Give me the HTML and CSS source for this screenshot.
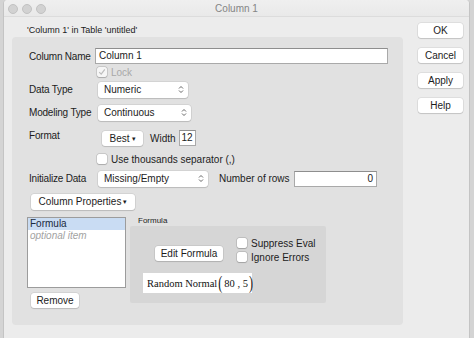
FILE: index.html
```html
<!DOCTYPE html>
<html lang="en">
<head>
    <meta charset="UTF-8">
    <title>Column 1</title>
    <link rel="stylesheet" href="styles.css">
</head>
<body>
    <div class="window">
        <div class="titlebar">
            <div class="lights"><span></span><span></span><span></span></div>
            <div class="title">Column 1</div>
        </div>
        <div class="content">
            <div class="main">
                <div class="caption">'Column 1' in Table 'untitled'</div>
                <div class="panel">
                    <div class="row">
                        <span class="lbl">Column Name</span>
                        <div class="field name-field">Column 1</div>
                    </div>
                    <div class="row check-row lock-row">
                        <span class="box checked"><svg width="8" height="8" viewBox="0 0 8 8"><path d="M1.2 4.2 L3.2 6.2 L6.8 1.4" fill="none" stroke="#bdbdbd" stroke-width="1.2"/></svg></span>
                        <span class="muted">Lock</span>
                    </div>
                    <div class="row type-row">
                        <span class="lbl lbl-sel">Data Type</span>
                        <div class="select sel-numeric">Numeric<svg class="chev" width="6" height="9" viewBox="0 0 6 9"><path d="M1 3.5 L3 1.5 L5 3.5 M1 5.5 L3 7.5 L5 5.5" fill="none" stroke="#555" stroke-width="0.9"/></svg></div>
                    </div>
                    <div class="row model-row">
                        <span class="lbl lbl-sel">Modeling Type</span>
                        <div class="select sel-cont">Continuous<svg class="chev" width="6" height="9" viewBox="0 0 6 9"><path d="M1 3.5 L3 1.5 L5 3.5 M1 5.5 L3 7.5 L5 5.5" fill="none" stroke="#555" stroke-width="0.9"/></svg></div>
                    </div>
                    <div class="row format-row">
                        <span class="lbl lbl-top">Format</span>
                        <div class="btn best-btn">Best<span class="caret">&#9662;</span></div>
                        <span class="width-lbl">Width</span>
                        <div class="field width-field">12</div>
                    </div>
                    <div class="row check-row sep-row">
                        <span class="box"></span>
                        <span>Use thousands separator (,)</span>
                    </div>
                    <div class="row init-row">
                        <span class="lbl lbl-sel">Initialize Data</span>
                        <div class="select sel-missing">Missing/Empty<svg class="chev" width="6" height="9" viewBox="0 0 6 9"><path d="M1 3.5 L3 1.5 L5 3.5 M1 5.5 L3 7.5 L5 5.5" fill="none" stroke="#555" stroke-width="0.9"/></svg></div>
                        <span class="rows-lbl">Number of rows</span>
                        <div class="field rows-field">0</div>
                    </div>
                    <div class="row props-row">
                        <div class="btn props-btn">Column Properties<span class="caret">&#9662;</span></div>
                    </div>
                    <div class="lower">
                        <div class="list-col">
                            <div class="list">
                                <div class="item selected">Formula</div>
                                <div class="item optional">optional item</div>
                            </div>
                            <div class="btn remove-btn">Remove</div>
                        </div>
                        <div class="formula-col">
                            <div class="group-lbl">Formula</div>
                            <div class="group">
                                <div class="group-top">
                                    <div class="btn edit-btn">Edit Formula</div>
                                    <div class="opts">
                                        <div class="check-row"><span class="box"></span><span>Suppress Eval</span></div>
                                        <div class="check-row"><span class="box"></span><span>Ignore Errors</span></div>
                                    </div>
                                </div>
                                <div class="formula">Random Normal<span class="paren">(</span>80 , 5<span class="paren">)</span></div>
                            </div>
                        </div>
                    </div>
                </div>
            </div>
            <div class="side">
                <div class="btn side-btn">OK</div>
                <div class="btn side-btn">Cancel</div>
                <div class="btn side-btn">Apply</div>
                <div class="btn side-btn">Help</div>
            </div>
        </div>
    </div>
</body>
</html>
```

FILE: styles.css
```css
body {
    margin: 0;
    width: 474px;
    height: 338px;
    overflow: hidden;
    background-color: #d4d4d4;
    font-family: 'Liberation Sans', Arial, sans-serif;
    font-size: 10px;
    color: #1c1c1c;
}

.window {
    margin-left: 3px;
    width: 465px;
    height: 338px;
    background-color: #ececec;
    border-left: 1px solid #c4c4c4;
    border-right: 1px solid #c4c4c4;
    border-radius: 4px 4px 0 0;
}

.titlebar {
    position: relative;
    height: 16px;
    border-bottom: 1px solid #dcdcdc;
    background: linear-gradient(#efefef, #e9e9e9);
    border-radius: 4px 4px 0 0;
}

.lights {
    display: flex;
    gap: 4px;
    padding: 4px 0 0 4px;
}

.lights span {
    width: 8px;
    height: 8px;
    border-radius: 50%;
    background-color: #d2d2d2;
    border: 0.5px solid #c2c2c2;
}

.title {
    position: absolute;
    top: 0;
    left: 0;
    right: 0;
    text-align: center;
    line-height: 17px;
    font-size: 10px;
    color: #858585;
}

.content {
    display: flex;
}

.main {
    margin-left: 8px;
    width: 391px;
}

.caption {
    height: 14px;
    padding: 6px 0 0 15px;
    line-height: 14px;
    font-size: 9px;
    color: #222;
}

.panel {
    height: 277px;
    padding: 11px 0 0 15px;
    background-color: #e1e1e1;
    border-radius: 4px;
}

.row {
    display: flex;
    align-items: center;
    padding-left: 2px;
    white-space: nowrap;
}

.lbl {
    width: 66px;
    flex-shrink: 0;
    letter-spacing: -0.2px;
}

.lbl-sel {
    width: 69px;
    margin-top: -2px;
}

.lbl-top {
    align-self: flex-start;
    width: 73px;
}

.field {
    height: 16px;
    box-sizing: border-box;
    background-color: #fff;
    border: 1px solid #a9a9a9;
    border-top-color: #8e8e8e;
    padding: 0 3px;
    line-height: 14px;
    font-size: 10px;
}

.name-field {
    width: 293px;
}

.select {
    position: relative;
    height: 16px;
    box-sizing: border-box;
    padding-left: 6px;
    line-height: 16px;
    background-color: #fff;
    border-radius: 3px;
    box-shadow: 0 0 0 0.5px rgba(0, 0, 0, 0.12), 0 1px 1px rgba(0, 0, 0, 0.12);
    font-size: 10px;
}

.chev {
    position: absolute;
    right: 4px;
    top: 3px;
}

.sel-numeric {
    width: 90px;
}

.sel-cont {
    width: 93px;
}

.sel-missing {
    width: 110px;
}

.btn {
    height: 15px;
    box-sizing: border-box;
    line-height: 15px;
    text-align: center;
    white-space: nowrap;
    background-color: #fff;
    border-radius: 3px;
    box-shadow: 0 0 0 0.5px rgba(0, 0, 0, 0.12), 0 1px 1px rgba(0, 0, 0, 0.12);
    font-size: 10px;
}

.caret {
    margin-left: 2px;
    font-size: 7px;
    vertical-align: 1px;
}

.check-row {
    display: flex;
    align-items: center;
    height: 10px;
    white-space: nowrap;
}

.box {
    width: 10px;
    height: 10px;
    box-sizing: border-box;
    margin-right: 4px;
    background-color: #fff;
    border-radius: 2px;
    box-shadow: 0 0 0 0.5px rgba(0, 0, 0, 0.2), 0 0.5px 1px rgba(0, 0, 0, 0.15);
    display: flex;
    align-items: center;
    justify-content: center;
}

.box.checked {
    background-color: #f6f6f6;
}

.muted {
    color: #a8a8a8;
}

.lock-row {
    margin-top: 3px;
    padding-left: 70px;
}

.type-row {
    margin-top: 5px;
}

.model-row {
    margin-top: 7px;
}

.format-row {
    margin-top: 9px;
    height: 16px;
}

.best-btn {
    width: 41px;
    margin-top: 1px;
}

.width-lbl {
    margin-left: 7px;
    margin-right: 3px;
}

.width-field {
    width: 17px;
    padding: 0 2px;
}

.sep-row {
    margin-top: 8px;
    padding-left: 70px;
}

.init-row {
    margin-top: 7px;
}

.rows-lbl {
    margin-left: 11px;
    width: 75px;
    margin-top: -2px;
}

.rows-field {
    width: 83px;
    text-align: right;
    margin-top: -1px;
}

.props-row {
    margin-top: 7px;
    padding-left: 4px;
}

.props-btn {
    width: 104px;
    height: 16px;
    line-height: 16px;
}

.lower {
    display: flex;
    margin-top: 7px;
}

.list-col {
    width: 99px;
}

.list {
    height: 71px;
    box-sizing: border-box;
    background-color: #fff;
    border: 1px solid #9c9c9c;
}

.item {
    height: 12px;
    line-height: 12px;
    padding-left: 2px;
}

.item.selected {
    background-color: #c9dcf3;
    color: #1a2a40;
}

.item.optional {
    font-style: italic;
    color: #a2a2a2;
}

.remove-btn {
    width: 48px;
    margin: 5px 0 0 4px;
}

.formula-col {
    margin-left: 4px;
}

.group-lbl {
    height: 9px;
    padding-left: 8px;
    font-size: 8px;
    line-height: 8px;
}

.group {
    width: 196px;
    height: 77px;
    background-color: #d6d6d6;
    border-radius: 2px;
}

.group-top {
    display: flex;
}

.edit-btn {
    width: 68px;
    margin: 20px 0 0 25px;
}

.opts {
    display: flex;
    flex-direction: column;
    gap: 4px;
    margin: 12px 0 0 14px;
}

.formula {
    display: flex;
    align-items: center;
    width: 109px;
    height: 20px;
    box-sizing: border-box;
    margin: 11px 0 0 13px;
    padding-left: 4px;
    white-space: nowrap;
    background-color: #fff;
    font-family: 'Liberation Serif', 'Times New Roman', serif;
    font-size: 10.5px;
    color: #111;
}

.paren {
    display: inline-block;
    margin: 0 2px 0 1px;
    font-size: 12px;
    transform: scaleY(1.6);
}

.side {
    display: flex;
    flex-direction: column;
    gap: 10px;
    margin: 6px 0 0 15px;
}

.side-btn {
    width: 45px;
}
```
